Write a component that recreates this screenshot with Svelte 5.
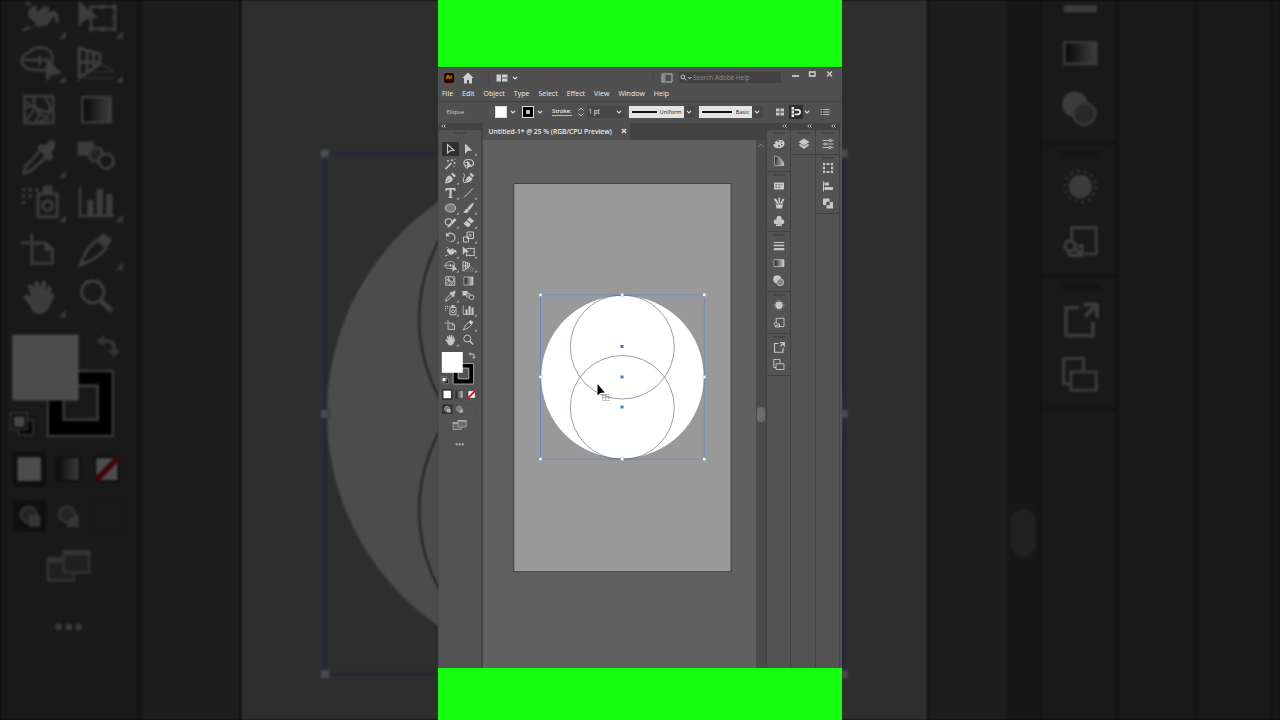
<script>
  const menus = ['File', 'Edit', 'Object', 'Type', 'Select', 'Effect', 'View', 'Window', 'Help'];

  // [icon, has flyout corner, is active]
  const tools = [
    ['selection', false, true],
    ['direct', true],
    ['wand', false],
    ['lasso', false],
    ['pen', true],
    ['curvature', false],
    ['type', true],
    ['line', true],
    ['ellipse', true],
    ['brush', true],
    ['shaper', true],
    ['eraser', true],
    ['rotate', true],
    ['scale', true],
    ['warp', true],
    ['freeTransform', true],
    ['shapeBuilder', true],
    ['perspective', true],
    ['mesh', false],
    ['gradient', false],
    ['eyedropper', true],
    ['blend', false],
    ['sprayer', true],
    ['graph', true],
    ['artboard', false],
    ['slice', true],
    ['hand', true],
    ['zoom', false]
  ];

  const docks = [
    [
      ['palette', 'guide'],
      ['swatches', 'brushes', 'club'],
      ['strokes', 'gradientPanel', 'transparency'],
      ['appearance', 'styles'],
      ['export', 'artboards']
    ],
    [['layers']],
    [['properties'], ['transform', 'align', 'pathfinder']]
  ];

  const handles = [
    [540.5, 294.8],
    [622.3, 294.8],
    [704.3, 294.8],
    [540.5, 377],
    [704.3, 377],
    [540.5, 459.2],
    [622.3, 459.2],
    [704.3, 459.2]
  ];

  // All icons are drawn on a 24x24 grid
  const icons = {
    selection: '<path d="M6 3v17l5-4.500 8-1z" fill="none" stroke="currentColor" stroke-width="2.200"/>',
    direct: '<path d="M5 1v21l5.500-6 9-1z" fill="currentColor"/>',
    wand: '<path d="M2 22 14 10" stroke="currentColor" stroke-width="3.400"/><path d="M15 2v5M12.500 4.500h5M20 8v4M18 10h4.500M7 4v4M5 6h4M19 15v3M20 3l2-1" stroke="currentColor" stroke-width="1.800"/>',
    lasso: '<path d="M8 16C0 14 1 3 12 3s13 10 6 13M5 14c0 4 3 3 2 7" fill="none" stroke="currentColor" stroke-width="2.400"/><path d="M9 5v17l4-4 7-.5z" fill="currentColor"/><path d="M5 9h9" stroke="currentColor" stroke-width="1.800"/>',
    pen: '<path d="M1 23c1-9 3-15 10-16l6 6c-1 6-6 9-16 10z" fill="currentColor"/><path d="m13 4 3-3 7 7-3 3z" fill="currentColor"/><path d="m3 21 7-7" stroke="#515151" stroke-width="1.300"/>',
    curvature: '<path d="M5 22c1-8 4-13 9-14l6 5c-2 6-7 8-15 9zM14 5l3-4 6 6-3 4z" fill="currentColor"/><path d="M2 3c6 5-4 11 1 18h4" fill="none" stroke="currentColor" stroke-width="2"/><path d="m6 21 6-6" stroke="#515151" stroke-width="1.300"/>',
    type: '<path d="M2 2h20v6h-2.200c-.4-2-1.400-2.700-3.200-2.700h-2.400V19c0 1 .6 1.400 2.400 1.500V22H7.500v-1.500c1.800-.1 2.400-.5 2.400-1.500V5.300H7.500C5.700 5.300 4.700 6 4.300 8H2z" fill="currentColor"/>',
    line: '<path d="M3 21 21 3" stroke="currentColor" stroke-width="2"/>',
    ellipse: '<ellipse cx="12" cy="12" rx="10.500" ry="8" fill="#7c7c7c" stroke="currentColor" stroke-width="2"/>',
    brush: '<path d="M22 2c-5 2-10 7-12 11l3 3c4-3 8-8 9-14zM9 14c-5 0-3 6-7 6 4 3 10 2 10-3z" fill="currentColor" stroke="currentColor"/>',
    shaper: '<circle cx="8" cy="12" r="6.500" fill="none" stroke="currentColor" stroke-width="2.300"/><path d="M7 20 20 4l4 4-14 14-5 1z" fill="currentColor"/>',
    eraser: '<path d="m14 2 9 8-5 5-9-7z" fill="currentColor"/><path d="m8 9 9 7-4 6-4-.5-7-6z" fill="currentColor"/><path d="m8 9 9 7" stroke="#515151"/>',
    rotate: '<path d="M5 8c5-7 16-3 16 5 0 5-4 8-8 8" fill="none" stroke="currentColor" stroke-width="2.200"/><path d="M3 3v8h8z" fill="currentColor"/><path d="M11 21c-4 0-7-3-8-7" fill="none" stroke="currentColor" stroke-width="1.500" stroke-dasharray="1.500 2"/>',
    scale: '<path d="M9 2h13v13H9zM2 12h10v10H2z" fill="none" stroke="currentColor" stroke-width="2"/><path d="m10 14 7-7M12 7h5v5" fill="none" stroke="currentColor" stroke-width="1.500"/>',
    warp: '<path d="M3 20c6-1 8-3 5-6-4-2-4-6-2-8 3-3 5-1 4 2 2 1 2-3 6-3 3 0 3 3 0 4 3 1 4-3 6-1 3 2 2 5 2 7-3 1-2-3-3-4-2 2-3 6-6 6-4 2-6-2-8 2" fill="currentColor"/><path d="m1 20 5-2M4 2l2 2" stroke="currentColor" stroke-width="1.800"/>',
    freeTransform: '<path d="M8.500 5h15v14h-15z" fill="none" stroke="currentColor" stroke-width="1.700"/><path d="M.5 1v17l4.500-5 8-1z" fill="currentColor"/><path d="M14 3.500h3v3h-3zM22 3.500h2.500v3H22zM22 10.500h2.500v3H22zM22 17.500h2.500v3H22zM14 17.500h3v3h-3zM7 17.500h3v3H7z" fill="currentColor"/>',
    shapeBuilder: '<path d="M7 16.500C-1 16-1 7 5 6c5-5 14-4 15 2 0 5-1 7-3 8-3 2-5 1-10 .5zM2 10.500h16M12 8v6" fill="none" stroke="currentColor" stroke-width="1.700"/><path d="M16 9v15l4-4 6-1z" fill="currentColor"/>',
    perspective: '<path d="M1 3v19L14 13V7zM1 12h13M6 5v13M10 6v10" fill="none" stroke="currentColor" stroke-width="2"/><path d="m14 13 9 5M8 18h14M3 22h20" stroke="currentColor" stroke-width="1" opacity=".6"/>',
    mesh: '<path d="M2.500 3.500h18v17h-18z" fill="none" stroke="currentColor" stroke-width="1.700"/><path d="M3 11c7-5 10 6 17 1M9 4c-4 5 7 9 0 16M15 4c5 5 5 12-3 16M3 19c5-5 7-8 5-15M4 7l14 12" fill="none" stroke="currentColor" stroke-width="1.500"/>',
    gradient: '<path d="M3 4h18v16H3z" fill="url(#ramp)" stroke="currentColor" stroke-width="1.500"/>',
    eyedropper: '<path d="m13 7 4 4L6 21l-4 1 1-4z" fill="none" stroke="currentColor" stroke-width="1.900"/><path d="m11 6 2-2 3 1c2-4 7-5 5 1-1 2-2 2-2 3l1 3-2 2z" fill="currentColor" stroke="currentColor"/>',
    blend: '<path d="M0 2h10v9H0z" fill="currentColor"/><rect x="7.500" y="6" width="8" height="8.500" rx="3" fill="#777" stroke="currentColor" stroke-width="1.500"/><circle cx="18" cy="14.500" r="4.600" fill="#515151" stroke="currentColor" stroke-width="1.800"/>',
    sprayer: '<path d="M11 7h12v14.500H11z" fill="none" stroke="currentColor" stroke-width="1.900"/><circle cx="17" cy="14.500" r="3" fill="none" stroke="currentColor" stroke-width="2"/><path d="M14 2h6v4h-6zM1 3.500h2v2H1zM5 3.500h2v2H5zM9 3.500h2v2H9zM1 7.500h2v2H1zM5 7.500h2v2H5zM1 11.500h2v2H1z" fill="currentColor"/>',
    graph: '<path d="M1.500 3v18H23" fill="none" stroke="currentColor" stroke-width="1.600"/><path d="M6 11h4v10H6zM12 4h4v17h-4zM18 7h4v14h-4z" fill="currentColor"/>',
    artboard: '<path d="M7 2v5M0 8h6M7 8h9l4 4v9H7z" fill="#626262" stroke="currentColor" stroke-width="1.700"/><path d="M15 8v5h5" fill="currentColor"/>',
    slice: '<path d="M1.500 22C4 15 8 9 13 6l5 5c-3 5-8 8-16.500 11z" fill="none" stroke="currentColor" stroke-width="1.900"/><path d="m13 5 3-3 6 4-4 6z" fill="currentColor"/>',
    hand: '<path d="M8 21c-2-4-4-6-6-9 1-2 3-1 5 1L5 5c2-1 3 0 4 4V3c2-1 3 0 3 6l2-7c2 0 2 2 1 8l3-5c2 1 1 3 0 7l2-2c2 1 0 4-1 6-1 3-3 5-4 6-3 1-5 1-7-1z" fill="currentColor" stroke="currentColor" stroke-width=".7"/>',
    zoom: '<circle cx="9.500" cy="9" r="7" fill="none" stroke="currentColor" stroke-width="2"/><path d="m14 14 7.500 7" stroke="currentColor" stroke-width="3.200"/>',
    palette: '<path d="M23 11c1-9-14-9-19-3-2 3 1 4 3 4-4-1-7 1-6 4 3 7 22 6 22-5z" fill="currentColor"/><path d="M9 6h3v2H9zM15 7h3v2h-3zM16 12h3v2h-3z" fill="#535353"/><circle cx="12" cy="16" r="2" fill="#535353"/>',
    guide: '<path d="M3 2c10 1 17 8 19 19H3z" fill="url(#ramp)" stroke="currentColor" stroke-width="1.400"/><path d="m3 21 7-16 9 8z" fill="#999" opacity=".3"/>',
    swatches: '<path d="M2 5h20v14H2z" fill="currentColor"/><path d="M5 8h3v3H5zM11 8h3v3h-3zM17 8h2v3h-2zM5 13h3v3H5zM11 13h3v3h-3z" fill="#707070"/>',
    brushes: '<path d="M5 13h15l-2 10H7z" fill="currentColor"/><path d="m8 13-6-7 1-4 5 4 3 7zM11 12V1h3v11zM15 12l4-9 4 2-5 8z" fill="currentColor"/><path d="M6 15h12" stroke="#535353"/>',
    club: '<circle cx="12" cy="6.500" r="5" fill="currentColor"/><circle cx="6.500" cy="13.500" r="5" fill="currentColor"/><circle cx="17.500" cy="13.500" r="5" fill="currentColor"/><path d="M11 9h2l1 10h4v3H6v-3h4z" fill="currentColor"/>',
    strokes: '<path d="M1.500 4h21v2h-21zM1.500 9.500h21v3h-21zM1.500 16h21v4.500h-21z" fill="currentColor"/>',
    gradientPanel: '<path d="M2 5.500h20v13.500H2z" fill="url(#ramp)" stroke="currentColor" stroke-width="1.500"/>',
    transparency: '<circle cx="8.500" cy="8.500" r="8" fill="currentColor"/><circle cx="14.500" cy="14.500" r="7" fill="#868686" stroke="currentColor" stroke-width="1.500"/>',
    appearance: '<circle cx="12" cy="12.500" r="7.300" fill="currentColor"/><circle cx="12" cy="12.500" r="9.800" fill="none" stroke="currentColor" stroke-width="1.500" stroke-dasharray="1.500 2.900"/>',
    styles: '<path d="M6.500 10V2.500H22V19h-8" fill="none" stroke="currentColor" stroke-width="1.800"/><rect x="2.500" y="11" width="6" height="6" rx="2" fill="none" stroke="currentColor" stroke-width="2"/><path d="M10 14h3v6H5v-2M9 16l3 3" fill="none" stroke="currentColor" stroke-width="2"/>',
    export: '<path d="M11 3H3v17.500h17V12" fill="none" stroke="currentColor" stroke-width="2.300"/><path d="M14 1h8.500v8.500M22 1.500l-7 7" fill="none" stroke="currentColor" stroke-width="2.500"/>',
    artboards: '<path d="M6 17H1.500V1H14v8" fill="none" stroke="currentColor" stroke-width="1.800"/><path d="M6 9.500h16V21H6z" fill="none" stroke="currentColor" stroke-width="1.800"/>',
    layers: '<path d="m12 1 11 7-11 7L1 8z" fill="currentColor"/><path d="m1 14 4-2 7 4.500 7-4.500 4 2-11 8z" fill="currentColor"/>',
    properties: '<path d="M1 5h13M19 5h4M1 12h3M9 12h14M1 19h12M18 19h5" stroke="currentColor" stroke-width="1.800"/><path d="M14.500 3h4v4h-4zM4.500 10h4v4h-4zM13.500 17h4v4h-4z" fill="none" stroke="currentColor" stroke-width="1.700"/>',
    transform: '<path d="M4 4h16v16H4z" fill="none" stroke="currentColor" stroke-width="1.700" stroke-dasharray="3 1.500"/><path d="M2 2h4v4H2zM10 2h4v4h-4zM18 2h4v4h-4zM2 10h4v4H2zM18 10h4v4h-4zM2 18h4v4H2zM10 18h4v4h-4zM18 18h4v4h-4z" fill="currentColor"/>',
    align: '<path d="M2 3h2v20H2zM5 5h9v6H5zM5 14h17v6H5z" fill="currentColor"/>',
    pathfinder: '<path d="M2 3h13v13H2z" fill="currentColor"/><path d="M9 10h13v13H9z" fill="currentColor"/><path d="M9 10h6v6H9z" fill="#444" stroke="#777"/>',
    home: '<path d="M12 1 .5 12H4v11h6v-7h4v7h6V12h3.500z" fill="currentColor"/>',
    arrange: '<path d="M1 5h9v14H1zM12 5h11v6H12zM12 13h11v6H12z" fill="currentColor"/>',
    workspace: '<path d="M2 4h20v16H2z" fill="none" stroke="currentColor" stroke-width="1.700"/><path d="M4 6h5v12H4z" fill="#8b8b8b"/>',
    gridView: '<path d="M4 5h7v6H4zM13 5h7v6h-7zM4 13h7v6H4zM13 13h7v6h-7z" fill="currentColor"/>',
    snap: '<path d="M3 2h5v5.500H3zM3 9h5v6H3zM3 16.500h5V22H3z" fill="currentColor"/><path d="M9 7.500h6c7 0 7 9 0 9H9" fill="none" stroke="currentColor" stroke-width="3.500"/>',
    list: '<path d="M3 7h3M8 7h13M3 12h3M8 12h13M3 17h3M8 17h13" stroke="currentColor" stroke-width="1.800"/>'
  };
</script>

{#snippet icon(name, corner)}
  <svg class="icon" viewBox="0 0 24 24">
    {@html icons[name]}
    {#if corner}
      <path d="M28.500 20.500v4.500H24z" fill="currentColor" />
    {/if}
  </svg>
{/snippet}

{#snippet caret()}
  <svg class="caret" viewBox="0 0 10 10"><path d="m1.500 3 3.500 3.500L8.500 3" /></svg>
{/snippet}

{#snippet collapse()}
  <svg class="collapse" viewBox="0 0 10 8"><path d="M4.500 1 1.500 4l3 3M9 1 6 4l3 3" /></svg>
{/snippet}

{#snippet header()}
  <header class="title-bar">
    <span class="logo">Ai</span>
    <span class="home">{@render icon('home')}</span>
    <span class="arrange">{@render icon('arrange')}{@render caret()}</span>
    <span class="workspace">{@render icon('workspace')}</span>
    <div class="search">
      <svg class="glass" viewBox="0 0 12 12"><circle cx="5" cy="5" r="3.300" /><path d="m7.500 7.500 3.500 3.500" /></svg>
      {@render caret()}
      <span>Search Adobe Help</span>
    </div>
    <svg class="window-buttons" viewBox="0 0 46 12">
      <path d="M3 8h7" stroke-width="1.600" />
      <path d="M20.500 4H26v4h-5.500z" stroke-width="1.300" />
      <path d="m38 3.500 5 5M43 3.500l-5 5" stroke-width="1.200" />
    </svg>
  </header>

  <nav class="menu-bar">
    {#each menus as menu}
      <span>{menu}</span>
    {/each}
  </nav>

  <div class="control-bar">
    <span class="object-name">Ellipse</span>
    <span class="swatch"></span>
    <span class="drop">{@render caret()}</span>
    <span class="swatch outline"></span>
    <span class="drop">{@render caret()}</span>
    <span class="stroke-label">Stroke:</span>
    <svg class="spinner" viewBox="0 0 8 12"><path d="m1.500 4.500 2.500-2.300 2.500 2.300M1.500 7.500l2.500 2.300 2.500-2.300" /></svg>
    <span class="weight">1 pt</span>
    <span class="drop dark">{@render caret()}</span>
    <span class="profile uniform"><i></i>Uniform</span>
    <span class="drop dark">{@render caret()}</span>
    <span class="profile basic"><i></i>Basic</span>
    <span class="drop dark">{@render caret()}</span>
    <span class="grid-view">{@render icon('gridView')}</span>
    <span class="snap">{@render icon('snap')}</span>
    <span class="drop snap-drop">{@render caret()}</span>
    <span class="list">{@render icon('list')}</span>
  </div>
{/snippet}

{#snippet workspace(front)}
  <div class="app">
    {#if front}
      {@render header()}
    {:else}
      <div class="header-space"></div>
    {/if}

    <div class="workspace-area">
      <aside class="toolbar">
        <div class="strip">{@render collapse()}</div>
        <div class="grip"></div>
        <div class="tools">
          {#each tools as [name, corner, active]}
            <span class="tool" class:active>{@render icon(name, corner)}</span>
          {/each}
        </div>

        <svg class="colors" viewBox="438 347 43 105">
          <!-- stroke and fill -->
          <path d="M453.100 363.500h20.500v20.500h-20.500z" fill="#000" stroke="#bbb" stroke-width=".8" />
          <path d="M458.100 368.100h10.700v10.700h-10.700z" fill="#535353" stroke="#bbb" stroke-width=".9" />
          <path d="M441.800 352h21v20.800h-21z" fill="#fff" />
          <path d="M470.500 354h1.500q2 0 2 2v1.500" fill="none" stroke="#aaa" stroke-width="1.300" />
          <path d="m468.400 354 2.500-2v4zM474 359.200l-2-2.400h4z" fill="#aaa" />
          <path d="M443.800 379h4.600v4.600h-4.600z" fill="#111" stroke="#9a9a9a" stroke-width=".6" />
          <path d="M441.400 376.800h5.100v5.100h-5.100z" fill="#222" stroke="#9a9a9a" stroke-width=".6" />
          <path d="M442.400 377.800h3.300v3.300h-3.300z" fill="#eee" />
          <!-- color, gradient, none -->
          <path d="M442 389h10.600v11H442z" fill="#333" />
          <path d="M443.500 390.700h7.400v7.500h-7.400z" fill="#fff" />
          <path d="M455.700 390.700h7.400v7.500h-7.400z" fill="url(#ramp)" stroke="#3b3b3b" stroke-width=".7" />
          <path d="M468 390.700h7.400v7.500H468z" fill="#fff" stroke="#333" stroke-width=".7" />
          <path d="m468 398.200 7.400-7.500" stroke="#d01520" stroke-width="1.900" />
          <!-- drawing modes -->
          <path d="M442 404.200h10.600v9.900H442z" fill="#333" />
          <path d="M465.800 404.200h10.600v9.900h-10.600z" fill="none" stroke="#4d4d4d" stroke-width=".4" />
          <g fill="#747474" stroke="#a5a5a5" stroke-width=".8">
            <circle cx="447" cy="408.800" r="2.500" />
            <circle cx="459.200" cy="408.800" r="2.500" />
          </g>
          <path d="M447 408.900h3.700v3.700H447z" fill="#b0b0b0" />
          <path d="M459.600 410.500l3.200-2v4.200h-3.600z" fill="#b0b0b0" />
          <path d="M469.500 407.500h2M473 410.500l-2 2" stroke="#606060" stroke-width=".6" />
          <!-- screen mode -->
          <g fill="#6a6a6a" stroke="#aaa" stroke-width=".8">
            <path d="M453.100 422.700h8.200v6.800h-8.200z" />
            <path d="M458.100 420.500h8v6.500h-8z" />
          </g>
          <path d="M457.700 420h8.800v1.700h-8.800zM452.700 422.300h5v1.700h-5z" fill="#aaa" />
          <g fill="#bbb">
            <circle cx="456.500" cy="444.300" r="1.100" />
            <circle cx="459.700" cy="444.300" r="1.100" />
            <circle cx="462.800" cy="444.300" r="1.100" />
          </g>
        </svg>
      </aside>

      <section class="document">
        <div class="tab-bar">
          {#if front}
            <div class="tab">
              <span>Untitled-1* @ 25 % (RGB/CPU Preview)</span>
              <svg class="tab-close" viewBox="0 0 8 8"><path d="m2 2 4 4M6 2 2 6" /></svg>
            </div>
          {/if}
        </div>
        <div class="viewport">
          <svg class="canvas" viewBox="483 140 273 528.500">
            <path d="M513.800 183.500h217.200v388.200h-217.200z" fill="#999" stroke="#2a2a2a" stroke-width=".7" />
            <circle cx="622.500" cy="377" r="81.300" fill="#fff" />
            <g fill="none" stroke="#5b6a85" stroke-width=".65">
              <circle cx="622.300" cy="347" r="52" />
              <circle cx="622.300" cy="407.500" r="52" />
            </g>
            <path d="M540.500 294.800h163.800v164.400h-163.800z" fill="none" stroke="#6a80cc" stroke-width=".75" />
            <g fill="#fff" stroke="#8ba0d8" stroke-width=".4">
              {#each handles as [x, y]}
                <rect x={x - 1.4} y={y - 1.4} width="2.800" height="2.800" />
              {/each}
            </g>
            <path d="M620.500 345h3v3h-3zM620.500 375.500h3v3h-3zM620.500 405.500h3v3h-3z" fill="#4a76c4" />
            {#if front}
              <path d="M597.500 384v11.500l2.500-2.500 4.800-.6z" fill="#000" />
              <path d="M602.500 394.500h6.500v6h-6.500zM602.500 397.500h6.500M605.700 394.500v6" fill="none" stroke="#555" stroke-width=".7" stroke-dasharray="1 1" />
            {/if}
          </svg>
          <div class="scrollbar">
            {#if front}
              <svg class="scroll-up" viewBox="0 0 10 10"><path d="M2 7l3-3 3 3" /></svg>
            {/if}
            <div class="thumb"></div>
          </div>
        </div>
      </section>

      {#each docks as groups}
        <aside class="dock">
          <div class="strip">{@render collapse()}</div>
          {#each groups as group}
            <div class="group">
              <div class="grip"></div>
              {#each group as name}
                <span class="panel-icon">{@render icon(name)}</span>
              {/each}
            </div>
          {/each}
        </aside>
      {/each}
    </div>
  </div>
{/snippet}

<svg class="defs" width="0" height="0">
  <defs>
    <linearGradient id="ramp">
      <stop offset="0" stop-color="#1c1c1c" />
      <stop offset="1" stop-color="#cfcfcf" />
    </linearGradient>
  </defs>
</svg>

<main class="screen">
  <div class="backdrop" aria-hidden="true">
    <div class="frame enlarged">
      {@render workspace(false)}
    </div>
  </div>
  <div class="frame">
    {@render workspace(true)}
  </div>
</main>

<style>
  :global(body) {
    margin: 0;
    background: #000;
  }

  .defs {
    position: absolute;
  }

  .screen {
    position: relative;
    display: flex;
    justify-content: center;
    width: 1280px;
    height: 720px;
    overflow: hidden;
    font-family: 'Open Sans', 'Noto Sans', sans-serif;
    color: #ebebeb;
  }

  .screen * {
    box-sizing: border-box;
  }

  .backdrop {
    position: absolute;
    inset: 0;
    display: flex;
    justify-content: center;
    overflow: hidden;
    filter: brightness(0.3) blur(0.8px);
  }

  .frame {
    position: relative;
    flex: none;
    width: 404px;
    height: 720px;
    padding: 66.500px 0 52px;
    background: #16ff10;
    overflow: hidden;
  }

  .enlarged {
    transform: scale(3.168);
  }

  .app {
    display: flex;
    flex-direction: column;
    height: 601.500px;
    border-top: 1px solid #2d3a2d;
    background: #505050;
    overflow: hidden;
  }

  .header-space {
    height: 55px;
    flex: none;
  }

  .icon {
    display: block;
    flex: none;
    width: 12px;
    height: 12px;
    overflow: visible;
  }

  .caret {
    width: 6px;
    height: 6px;
    fill: none;
    stroke: #e0e0e0;
    stroke-width: 1.9;
  }

  .collapse {
    width: 5px;
    height: 4px;
    fill: none;
    stroke: #d0d0d0;
    stroke-width: 1.7;
  }

  /* Title bar */
  .title-bar {
    display: flex;
    align-items: center;
    flex: none;
    height: 20px;
    padding-left: 5.500px;
    color: #d0d0d0;
  }

  .logo {
    width: 10.500px;
    height: 10px;
    border-radius: 2px;
    background: #330000;
    color: #ff9a00;
    font-size: 6px;
    font-weight: 700;
    line-height: 9.500px;
    text-align: center;
  }

  .home {
    margin-left: 7.500px;
  }

  .arrange {
    display: flex;
    align-items: center;
    gap: 4px;
    margin-left: 14px;
    padding-left: 7px;
    border-left: 1px solid #484848;
  }

  .workspace {
    margin-left: 135px;
    padding-left: 7.500px;
    border-left: 1px solid #484848;
  }

  .search {
    display: flex;
    align-items: center;
    width: 102px;
    height: 11px;
    margin-left: 6px;
    padding-left: 0.500px;
    background: #424242;
    color: #8d8d8d;
    font-size: 6.400px;
  }

  .search span {
    margin-left: 1.500px;
    white-space: nowrap;
  }

  .search .caret {
    width: 5px;
  }

  .glass {
    width: 7px;
    height: 7px;
    fill: none;
    stroke: #d0d0d0;
    stroke-width: 1.6;
  }

  .window-buttons {
    width: 46px;
    height: 12px;
    margin: -7px 0 0 7.500px;
    fill: none;
    stroke: #d5d5d5;
  }

  /* Menu */
  .menu-bar {
    display: flex;
    align-items: center;
    flex: none;
    gap: 9px;
    height: 13.500px;
    padding: 0 0 0.500px 4px;
    font-size: 7px;
    line-height: 10px;
  }

  /* Control bar */
  .control-bar {
    display: flex;
    align-items: center;
    flex: none;
    height: 21.500px;
    border-top: 1px solid #414141;
    font-size: 6.200px;
  }

  .object-name {
    width: 57px;
    padding-left: 8.500px;
    color: #cdcdcd;
    font-size: 5.900px;
  }

  .swatch {
    flex: none;
    width: 12px;
    height: 12px;
    background: #fff;
    border: 1px solid #ddd;
  }

  .outline {
    margin-left: 4px;
    background: #bbb;
    border: 1px solid #ddd;
    box-shadow: inset 0 0 0 3px #000;
  }

  .drop {
    display: flex;
    align-items: center;
    justify-content: center;
    width: 11px;
    height: 12px;
  }

  .drop.dark {
    background: #474747;
  }

  .stroke-label {
    width: 20px;
    margin-left: 7px;
    border-bottom: 1px solid #bbb;
    font-weight: 600;
    font-size: 5.700px;
    line-height: 7px;
    white-space: nowrap;
  }

  .spinner {
    width: 8px;
    height: 12px;
    margin: 0 2px 0 5px;
    fill: none;
    stroke: #ccc;
  }

  .weight {
    width: 26.500px;
    height: 12px;
    padding-left: 1.500px;
    background: #464646;
    line-height: 12px;
  }

  .profile {
    display: flex;
    align-items: center;
    gap: 3px;
    height: 12px;
    margin-left: 4px;
    padding: 0 2px 0 3px;
    background: #e4e4e4;
    color: #222;
    font-size: 5.700px;
  }

  .profile i {
    flex: 1;
    height: 2px;
    background: #111;
  }

  .uniform {
    width: 55px;
  }

  .basic {
    width: 53px;
  }

  .basic i {
    max-width: 30px;
    margin-right: auto;
  }

  .grid-view {
    margin-left: 11px;
    color: #c5c5c5;
  }

  .snap {
    display: grid;
    place-items: center;
    width: 14px;
    height: 14px;
    margin-left: 3px;
    background: #2e2e2e;
  }

  .snap-drop {
    width: 9px;
  }

  .list {
    margin-left: 7px;
    color: #c5c5c5;
  }

  /* Workspace */
  .workspace-area {
    display: flex;
    flex: 1;
    min-height: 0;
    background: #535353;
  }

  .strip {
    display: flex;
    align-items: center;
    height: 7.500px;
    background: #424242;
  }

  .toolbar {
    display: flex;
    flex-direction: column;
    flex: none;
    width: 45px;
    border-left: 1px solid #4a4a4a;
    border-right: 2px solid #424242;
    color: #c8c8c8;
  }

  .toolbar .strip {
    padding-left: 2px;
  }

  .grip {
    width: 12px;
    height: 2px;
    margin: 2px auto 0;
    background: #464646;
  }

  .tools {
    display: grid;
    grid-template-columns: 18.500px 18.500px;
    grid-auto-rows: 14.680px;
    flex: none;
    height: 213.200px;
    padding-left: 2.200px;
    padding-top: 7.600px;
  }

  .tool {
    display: grid;
    place-items: center;
  }

  .tool :global(.icon) {
    width: 13px;
  }

  .tool.active {
    align-self: center;
    width: 17px;
    height: 13.500px;
    justify-self: center;
    background: #303030;
  }

  .colors {
    flex: none;
    width: 43px;
    height: 105px;
    margin-left: -1px;
  }

  .document {
    display: flex;
    flex-direction: column;
    flex: none;
    width: 284px;
  }

  .tab-bar {
    flex: none;
    height: 17.500px;
    background: #424242;
  }

  .tab {
    display: flex;
    align-items: center;
    justify-content: space-between;
    width: 147px;
    height: 17px;
    padding: 0 2px 0 5.500px;
    background: #505050;
    color: #ebebeb;
    font-size: 6.700px;
    font-weight: 600;
    white-space: nowrap;
  }

  .tab-close {
    width: 8px;
    height: 8px;
    fill: none;
    stroke: #ddd;
    stroke-width: 1.4;
  }

  .viewport {
    display: flex;
    flex: 1;
    min-height: 0;
    background: #606060;
  }

  .canvas {
    flex: none;
    width: 273px;
    height: 528.500px;
  }

  .scrollbar {
    display: flex;
    flex-direction: column;
    align-items: center;
    width: 11px;
    background: #4b4b4b;
    border-right: 1px solid #434343;
  }

  .scroll-up {
    flex: none;
    width: 8px;
    height: 8px;
    margin: 1px 0 -9px;
    fill: none;
    stroke: #9c9c9c;
  }

  .thumb {
    flex: none;
    width: 8.500px;
    height: 15px;
    margin-top: 267.300px;
    border-radius: 4px;
    background: #6d6d6d;
  }

  /* Panel docks */
  .dock {
    flex: none;
    width: 24.400px;
    border-right: 1.500px solid #434343;
    color: #c8c8c8;
  }

  .dock .strip {
    justify-content: flex-end;
    padding-right: 3px;
  }

  .group {
    display: flex;
    flex-direction: column;
    align-items: center;
    padding: 0 0 1.200px 1px;
    border-bottom: 1px solid #414141;
  }

  .group .grip {
    margin: 2px 0 1px;
  }

  .panel-icon {
    display: grid;
    place-items: center;
    height: 17.500px;
  }
</style>
